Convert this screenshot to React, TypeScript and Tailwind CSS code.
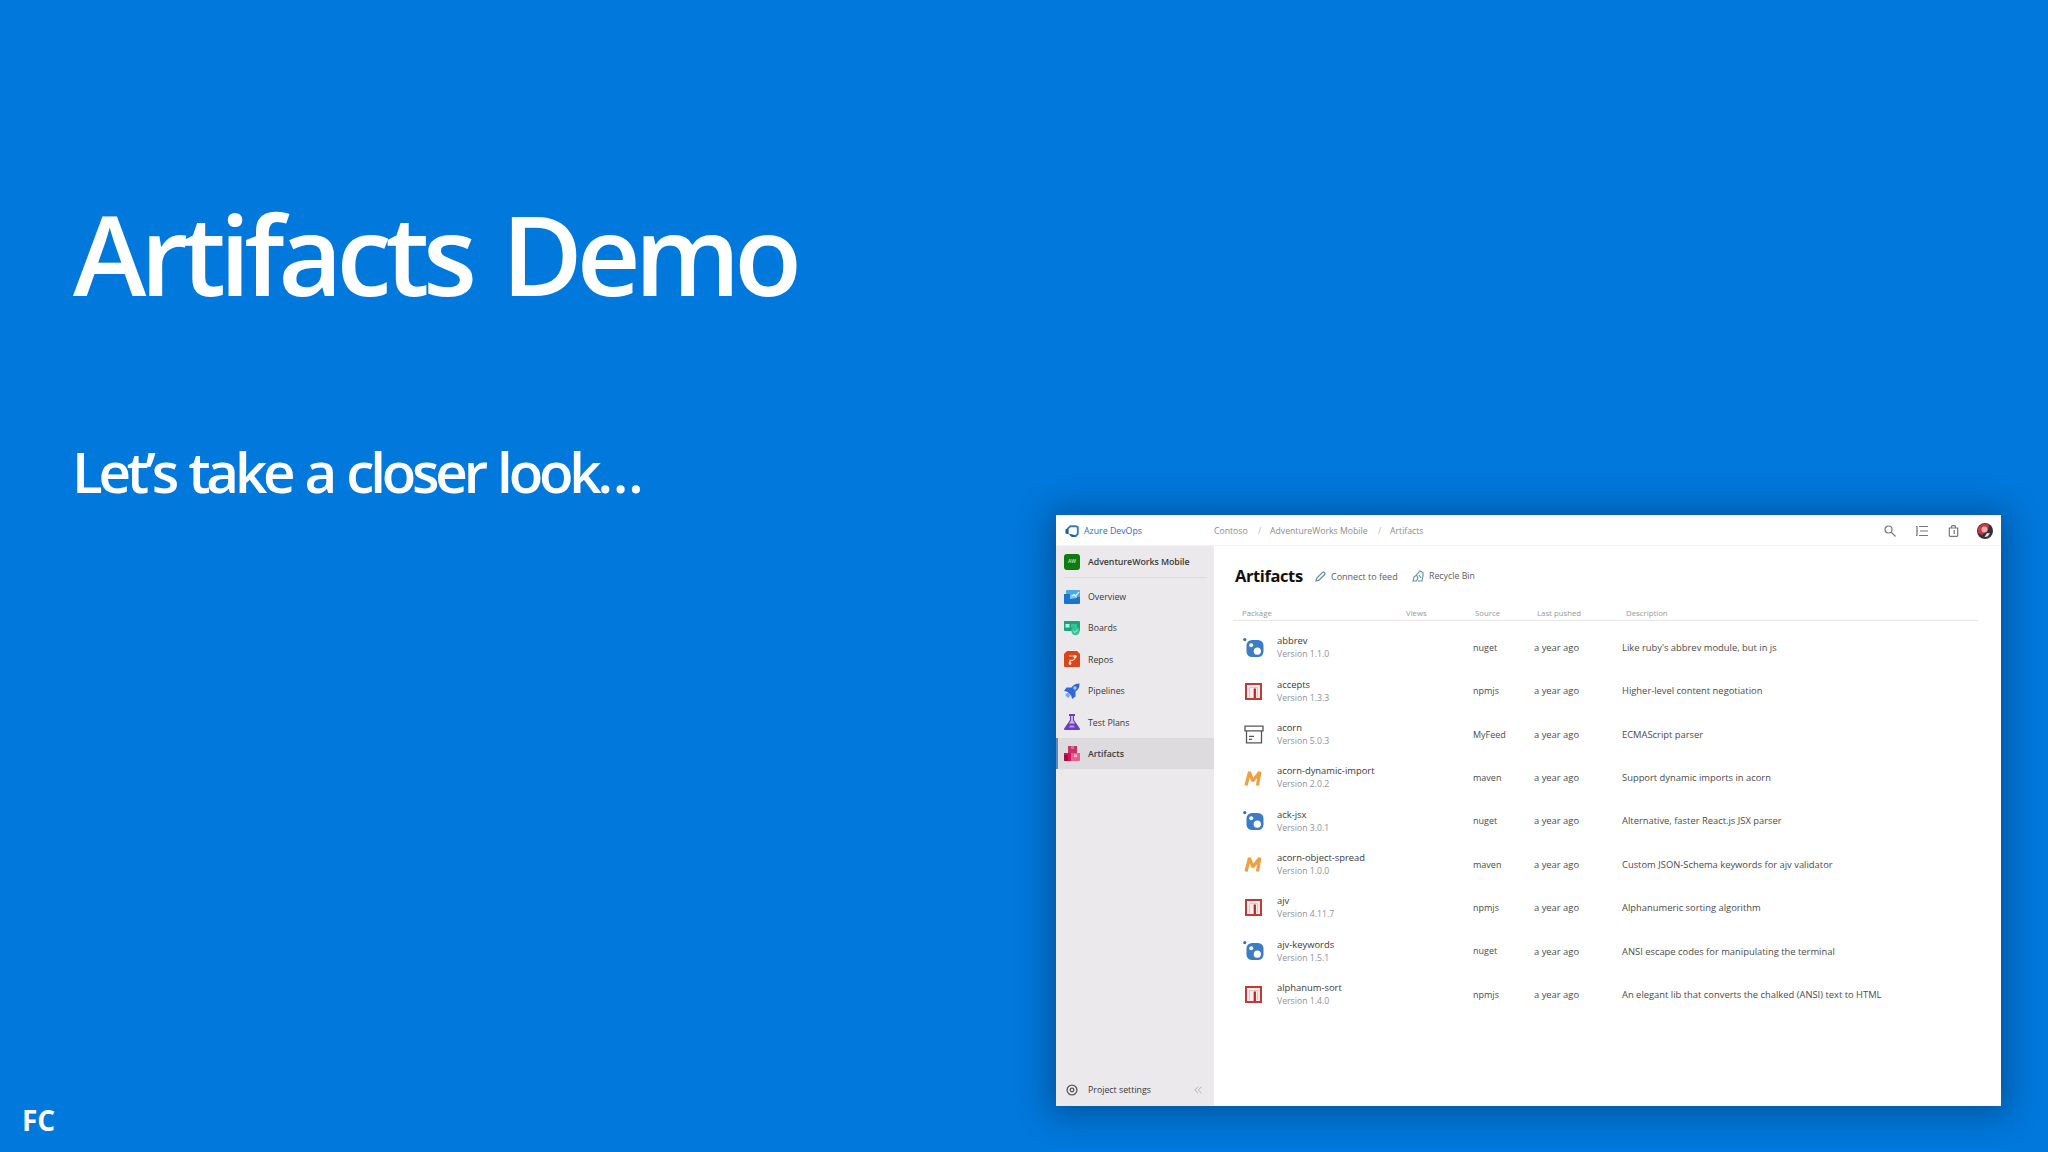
import type { ReactNode } from 'react'

type Source = 'nuget' | 'npmjs' | 'MyFeed' | 'maven'

interface PackageItem {
  name: string
  version: string
  source: Source
  description: string
}

const packages: PackageItem[] = [
  { name: 'abbrev', version: '1.1.0', source: 'nuget', description: "Like ruby's abbrev module, but in js" },
  { name: 'accepts', version: '1.3.3', source: 'npmjs', description: 'Higher-level content negotiation' },
  { name: 'acorn', version: '5.0.3', source: 'MyFeed', description: 'ECMAScript parser' },
  { name: 'acorn-dynamic-import', version: '2.0.2', source: 'maven', description: 'Support dynamic imports in acorn' },
  { name: 'ack-jsx', version: '3.0.1', source: 'nuget', description: 'Alternative, faster React.js JSX parser' },
  { name: 'acorn-object-spread', version: '1.0.0', source: 'maven', description: 'Custom JSON-Schema keywords for ajv validator' },
  { name: 'ajv', version: '4.11.7', source: 'npmjs', description: 'Alphanumeric sorting algorithm' },
  { name: 'ajv-keywords', version: '1.5.1', source: 'nuget', description: 'ANSI escape codes for manipulating the terminal' },
  { name: 'alphanum-sort', version: '1.4.0', source: 'npmjs', description: 'An elegant lib that converts the chalked (ANSI) text to HTML' },
]

function DevOpsLogo() {
  return (
    <svg viewBox="0 0 14 14" className="h-[14px] w-[14px]">
      <path d="M3 4.400 5.500 2.200h5.200l2.100 1v6.600L10.700 12H6.200" fill="none" stroke="#2f7fc0" strokeWidth="1.900" />
      <path d="M.5 5.600 3.600 3.600v6.600L.5 9.400zM3.600 9.600l6.600 1.600v2L5.500 12z" fill="#1c5c95" />
    </svg>
  )
}

function OverviewIcon() {
  return (
    <svg viewBox="0 0 16 16" className="h-4 w-4">
      <path d="M3 1h12a1 1 0 0 1 1 1v10H2V2a1 1 0 0 1 1-1z" fill="#48a8ea" />
      <path d="M0 5h6v3h10v6a1 1 0 0 1-1 1H1a1 1 0 0 1-1-1z" fill="#1b73ca" />
      <path d="M6 5.500h7V9l-7 1z" fill="#7cc6f5" />
      <path d="m8 7 2-1.500L11.500 7 15 3" fill="none" stroke="#d9f0ff" strokeWidth="1.200" />
    </svg>
  )
}

function BoardsIcon() {
  return (
    <svg viewBox="0 0 16 16" className="h-4 w-4">
      <path d="M0 1h15a1 1 0 0 1 1 1v9H1a1 1 0 0 1-1-1z" fill="#16a67b" />
      <rect x="1.500" y="4" width="4" height="3.500" fill="#b9f3df" />
      <rect x="7" y="4" width="6" height="3.500" fill="#35c496" />
      <circle cx="11.500" cy="11" r="4.200" fill="#35c496" />
      <path d="m9.400 11 1.600 1.600 2.800-3" fill="none" stroke="#c5f5e4" strokeWidth="1" />
    </svg>
  )
}

function ReposIcon() {
  return (
    <svg viewBox="0 0 16 16" className="h-4 w-4">
      <path d="M3 0h10l3 3v12a1 1 0 0 1-1 1H1a1 1 0 0 1-1-1V3z" fill="#d9441b" />
      <path d="M6 13V9.500c4 0 5-1 5-3.500" fill="none" stroke="#ffd2b8" strokeWidth="1.300" />
      <path d="M5 5h6" stroke="#f7a27c" strokeWidth="1.300" />
      <circle cx="6" cy="12.500" r="1.400" fill="#ffe3d3" />
      <circle cx="11" cy="5.500" r="1.700" fill="#ffe3d3" />
    </svg>
  )
}

function PipelinesIcon() {
  return (
    <svg viewBox="0 0 16 16" className="h-4 w-4">
      <path d="M15.500.5c-4 0-6 1.200-8 4H2.500L0 8l3.500.8 3.700 3.700.8 3.500 3.500-2.500V8.500c3-2 4-4 4-8z" fill="#3168d8" />
      <path d="m1 12 2.600-2.600 3 3L4 15z" fill="#7aa7f5" />
      <circle cx="11" cy="5" r="1.700" fill="#a9c6fb" />
    </svg>
  )
}

function TestPlansIcon() {
  return (
    <svg viewBox="0 0 16 16" className="h-4 w-4">
      <path d="M5 0h6v2h-1v4l5.800 8.500a1 1 0 0 1-.8 1.500H1a1 1 0 0 1-.8-1.500L6 6V2H5z" fill="#6b3fb5" />
      <path d="M7 2h2v4.400l2 3.100H5l2-3.100z" fill="#c9b6ef" />
      <path d="M5 13.500h6l-1.400-2H6z" fill="#b795f5" />
    </svg>
  )
}

function ArtifactsIcon() {
  return (
    <svg viewBox="0 0 16 16" className="h-4 w-4">
      <path d="M4 0h9v7H4z" fill="#c2356b" />
      <path d="M7 0h3v3H7z" fill="#dd6f99" />
      <path d="M0 7h7v8H1a1 1 0 0 1-1-1z" fill="#d4145a" />
      <path d="M7 7h9v7a1 1 0 0 1-1 1H7z" fill="#ef5b8f" />
      <path d="M0 9h4v6H1a1 1 0 0 1-1-1z" fill="#96123f" />
      <path d="M10 8.500h3v2.500h-3z" fill="#f9bdd2" />
    </svg>
  )
}

function NugetIcon() {
  return (
    <svg viewBox="0 0 21 20" className="h-5 w-[21px]">
      <circle cx="1.800" cy="1.600" r="1.600" fill="#3f6c9c" />
      <rect x="3.500" y="2" width="17" height="17" rx="5.500" fill="#3b7cc4" />
      <circle cx="8.200" cy="7.200" r="2" fill="#fff" />
      <circle cx="14.300" cy="13.200" r="3.600" fill="#fff" />
    </svg>
  )
}

function NpmIcon() {
  return (
    <svg viewBox="0 0 17 17" className="h-[17px] w-[17px]">
      <rect x="1" y="1" width="15" height="15" fill="#fdeceb" stroke="#c03a36" strokeWidth="2" />
      <path d="M4.500 14V4.500h8V14" fill="none" stroke="#e3a5a2" strokeWidth=".6" />
      <path d="M8.700 5.500h2.200V15H8.700z" fill="#b8221e" />
    </svg>
  )
}

function FeedIcon() {
  return (
    <svg viewBox="0 0 20 19" className="h-[19px] w-5" fill="none" stroke="#55555a" strokeWidth="1.300">
      <path d="M1 1.200h18v4.600H1zM2.500 5.800v12h15v-12M5 11.300h5M5 14.300h3" />
    </svg>
  )
}

function MavenIcon() {
  return (
    <svg viewBox="0 0 19 16" className="h-4 w-[19px]" fill="none" stroke="#eda044" strokeWidth="3.200">
      <path d="M2 15.500 5.500 2l3.200 9L15.800 2 13.500 15.500" strokeLinejoin="bevel" />
    </svg>
  )
}

const sourceIcons: Record<Source, ReactNode> = {
  nuget: <NugetIcon />,
  npmjs: <NpmIcon />,
  MyFeed: <FeedIcon />,
  maven: <MavenIcon />,
}

const navItems = [
  { label: 'Overview', icon: <OverviewIcon /> },
  { label: 'Boards', icon: <BoardsIcon /> },
  { label: 'Repos', icon: <ReposIcon /> },
  { label: 'Pipelines', icon: <PipelinesIcon /> },
  { label: 'Test Plans', icon: <TestPlansIcon /> },
  { label: 'Artifacts', icon: <ArtifactsIcon />, active: true },
]

function TopBar() {
  return (
    <header className="flex h-[31px] shrink-0 items-center border-b border-[#f4f2f4] pt-[2px] pr-2 pl-[9px]">
      <div className="flex w-[149px] items-center gap-[5px]">
        <DevOpsLogo />
        <span className="pt-[2px] text-[8.800px] text-[#1f6fc0]">Azure DevOps</span>
      </div>
      <nav className="flex items-center pt-[2px] text-[8.700px] text-[#8c8a8c]">
        <span className="w-[44px]">Contoso</span>
        <span className="w-[12px] text-[#b5b3b5]">/</span>
        <span className="w-[108px]">AdventureWorks Mobile</span>
        <span className="w-[12px] text-[#b5b3b5]">/</span>
        <span>Artifacts</span>
      </nav>
      <div className="ml-auto flex items-center gap-[20px]">
        <svg viewBox="0 0 12 12" className="h-3 w-3" fill="none" stroke="#77757a" strokeWidth="1.200">
          <circle cx="4.500" cy="4.500" r="3.500" />
          <path d="m7.200 7.200 4.300 4.300" />
        </svg>
        <svg viewBox="0 0 12 12" className="h-3 w-3" fill="none" stroke="#77757a" strokeWidth="1.200">
          <path d="M3 1.500h9M4 6h8M3 10.500h9M0 1.500h1.500M.5 6H2M0 10.500h1.500M1 2v8" />
        </svg>
        <svg viewBox="0 0 12 12" className="h-3 w-3" fill="none" stroke="#77757a" strokeWidth="1.200">
          <path d="M1.300 3h8.400v7.200a1.200 1.200 0 0 1-1.200 1.200h-6a1.200 1.200 0 0 1-1.200-1.200zM3.500 3V1.700a1 1 0 0 1 1-1h2a1 1 0 0 1 1 1V3M6.200 5v4" />
        </svg>
        <svg viewBox="0 0 16 16" className="-ml-[3px] h-4 w-4">
          <circle cx="8" cy="8" r="8" fill="#34303a" />
          <path d="M1 5C3 1 9-1 12 2l-1 5-6 5-4-2z" fill="#c23a48" />
          <circle cx="7.500" cy="6.500" r="3" fill="#f0a9ad" />
          <path d="m10 10 3 .5-2.500 3-3 .5z" fill="#e9e4ee" />
        </svg>
      </div>
    </header>
  )
}

function Sidebar() {
  return (
    <aside className="flex w-[158px] shrink-0 flex-col bg-[#ebe9eb] text-[8.800px] text-[#3b393c]">
      <div className="mr-[7px] ml-2 flex h-[32px] items-center gap-2 border-b border-[#dcdadc] pt-px">
        <span className="flex h-4 w-4 items-center justify-center rounded-[3px] bg-[#107c10] text-[5px] font-semibold text-[#bfe8bf]">
          AW
        </span>
        <span className="pt-[2px] font-semibold tracking-[-0.050px]">AdventureWorks Mobile</span>
      </div>
      <nav className="mt-[3px]">
        {navItems.map((item) => (
          <div
            key={item.label}
            className={`flex h-[31.400px] items-center gap-2 border-l-2 pl-[6px] ${
              item.active ? 'border-[#5b88b8] bg-[#dddbdd] font-semibold' : 'border-transparent'
            }`}
          >
            {item.icon}
            <span className="pt-[2px]">{item.label}</span>
          </div>
        ))}
      </nav>
      <div className="mt-auto flex h-8 items-center pr-[12px] pl-[10px]">
        <svg viewBox="0 0 12 12" className="mr-[10px] h-3 w-3" fill="none" stroke="#5b595c" strokeWidth="1.300">
          <circle cx="6" cy="6" r="4.900" />
          <circle cx="6" cy="6" r="1.800" />
        </svg>
        <span className="pt-[2px]">Project settings</span>
        <svg viewBox="0 0 8 8" className="ml-auto h-2 w-2" fill="none" stroke="#b3b1b4" strokeWidth="1">
          <path d="M4 .8.8 4 4 7.200M7.500.8 4.300 4l3.200 3.200" />
        </svg>
      </div>
    </aside>
  )
}

function PackageTable() {
  return (
    <div className="pl-[6px] text-[9.400px]">
      <div className="mr-[23px] -ml-px flex h-[17px] items-center border-b border-[#e6e4e8] pt-[4px] pl-[9px] text-[7.800px] text-[#98969a]">
        <span className="w-[164px]">Package</span>
        <span className="w-[69px]">Views</span>
        <span className="w-[62px]">Source</span>
        <span className="w-[89px]">Last pushed</span>
        <span>Description</span>
      </div>
      <div className="pt-[5px] text-[#4c4a4e]">
        {packages.map((item) => (
          <div key={item.name} className="flex h-[43.350px] items-center pl-[9px]">
            <div className="flex w-[34px] justify-center pr-[13px]">{sourceIcons[item.source]}</div>
            <div className="w-[196px] leading-[13px]">
              <div className="text-[#3b393c]">{item.name}</div>
              <div className="pt-px text-[8.700px] leading-[13px] text-[#929094]">Version {item.version}</div>
            </div>
            <span className="w-[61px] text-[9px]">{item.source}</span>
            <span className="w-[88px] pt-px">a year ago</span>
            <span className="pt-px whitespace-nowrap">{item.description}</span>
          </div>
        ))}
      </div>
    </div>
  )
}

function ArtifactsWindow() {
  return (
    <section className="flex h-[591px] w-[945px] flex-col bg-white shadow-[0_2px_32px_6px_rgba(0,0,0,0.300)]">
      <TopBar />
      <div className="flex min-h-0 flex-1">
        <Sidebar />
        <main className="flex-1 pt-[16px] pl-[14px]">
          <div className="ml-[7px] flex h-[28px] items-center text-[9px] text-[#5d5b5f]">
            <h2 className="w-[80px] text-[16.500px] font-bold tracking-[-0.400px] text-[#111]">Artifacts</h2>
            <svg viewBox="0 0 11 11" className="mr-[5px] h-[11px] w-[11px]" fill="none" stroke="#5f9099" strokeWidth="1.200">
              <path d="m1 10 .8-3L7.500 1.300a1 1 0 0 1 1.400 0l.8.8a1 1 0 0 1 0 1.400L4 9.200z" />
            </svg>
            <span className="w-[81px] pt-px">Connect to feed</span>
            <svg viewBox="0 0 12 12" className="mr-[5px] h-3 w-3" fill="none" stroke="#5f9099" strokeWidth="1.100">
              <path d="M4 5.500 8 1l3 1.500V6M11 6l-1 5H6M4.500 11H1l1-4 2.500-2L6 8zM7 5l2 3" />
            </svg>
            <span className="pt-[2px] text-[8.800px]">Recycle Bin</span>
          </div>
          <div className="h-[14px]" />
          <PackageTable />
        </main>
      </div>
    </section>
  )
}

export default function App() {
  return (
    <div className="flex h-[1152px] w-[2048px] overflow-hidden bg-[#0078dc] font-['Open_Sans','Noto_Sans',sans-serif]">
      <div className="flex w-[1056px] shrink-0 flex-col pt-[178px] text-white">
        <h1 className="ml-[73px] text-[111px] leading-[151px] font-semibold tracking-[-6.200px] whitespace-nowrap [word-spacing:8px]">
          Artifacts Demo
        </h1>
        <p className="mt-[104px] ml-[72px] text-[56.500px] leading-[78px] font-semibold tracking-[-4.200px] whitespace-nowrap [word-spacing:2.700px]">
          Let’s take a closer look…
        </p>
        <div className="mt-auto mb-[13px] ml-[22px] text-[28px] leading-[38px] font-bold">FC</div>
      </div>
      <div className="pt-[515px]">
        <ArtifactsWindow />
      </div>
    </div>
  )
}
